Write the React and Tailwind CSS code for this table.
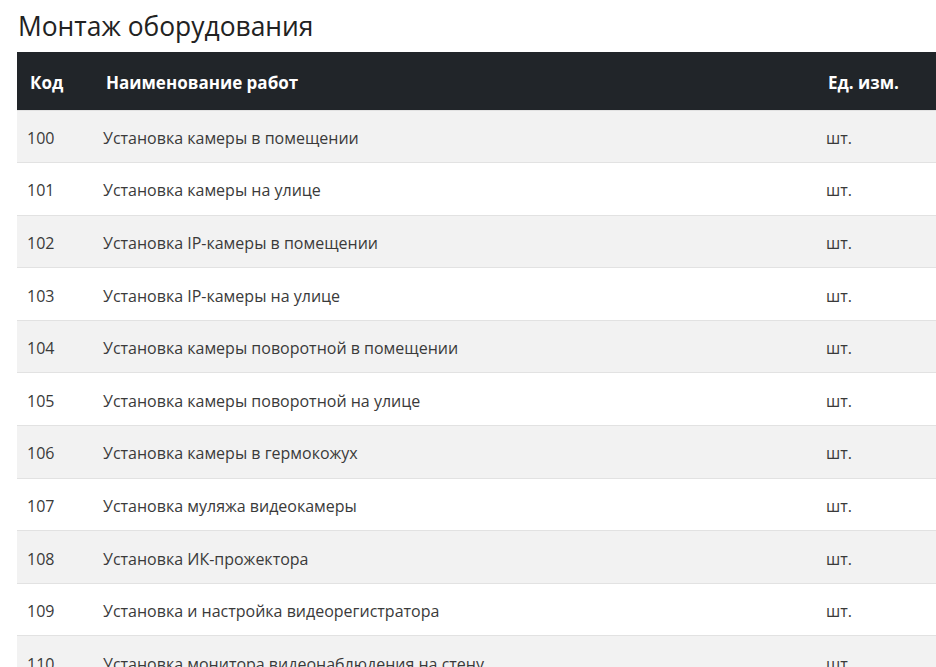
import React from 'react';

const rows = [
  ['100', 'Установка камеры в помещении', 'шт.'],
  ['101', 'Установка камеры на улице', 'шт.'],
  ['102', 'Установка IP-камеры в помещении', 'шт.'],
  ['103', 'Установка IP-камеры на улице', 'шт.'],
  ['104', 'Установка камеры поворотной в помещении', 'шт.'],
  ['105', 'Установка камеры поворотной на улице', 'шт.'],
  ['106', 'Установка камеры в гермокожух', 'шт.'],
  ['107', 'Установка муляжа видеокамеры', 'шт.'],
  ['108', 'Установка ИК-прожектора', 'шт.'],
  ['109', 'Установка и настройка видеорегистратора', 'шт.'],
  ['110', 'Установка монитора видеонаблюдения на стену', 'шт.'],
  ['111', 'Установка монитора видеонаблюдения на стол', 'шт.'],
];

export default function App(){
  return (
    <div className="w-[936px] h-[667px] overflow-hidden bg-white text-[#212529]" style={{ fontFamily: '"Open Sans", "Noto Sans", sans-serif' }}>
      <div className="pl-[17px]">
        <h1 className="text-[26.4px] leading-[52px] font-normal pl-[1px] text-[#222]">Монтаж оборудования</h1>
        <table className="w-[960px] border-collapse text-[16px]">
          <thead>
            <tr className="bg-[#212529] text-white h-[58px] text-[17px]">
              <th className="w-[76px] text-left font-bold pl-[13px] pt-[3px]">Код</th>
              <th className="text-left font-bold pl-[13px] pt-[3px]">Наименование работ</th>
              <th className="w-[163px] text-left font-bold pl-[14px] pt-[3px]">Ед. изм.</th>
            </tr>
          </thead>
          <tbody>
            {rows.map((r, i) => (
              <tr key={r[0]} className={(i % 2 === 0 ? 'bg-[#f2f2f2]' : 'bg-white') + ' h-[52.6px] border-t border-[#e2e2e2] text-[#3a3a3a]'}>
                <td className="pl-[10px] pt-[3px]">{r[0]}</td>
                <td className="pl-[10px] pt-[3px]">{r[1]}</td>
                <td className="pl-[12px] pt-[3px]">{r[2]}</td>
              </tr>
            ))}
          </tbody>
        </table>
      </div>
    </div>
  );
}
